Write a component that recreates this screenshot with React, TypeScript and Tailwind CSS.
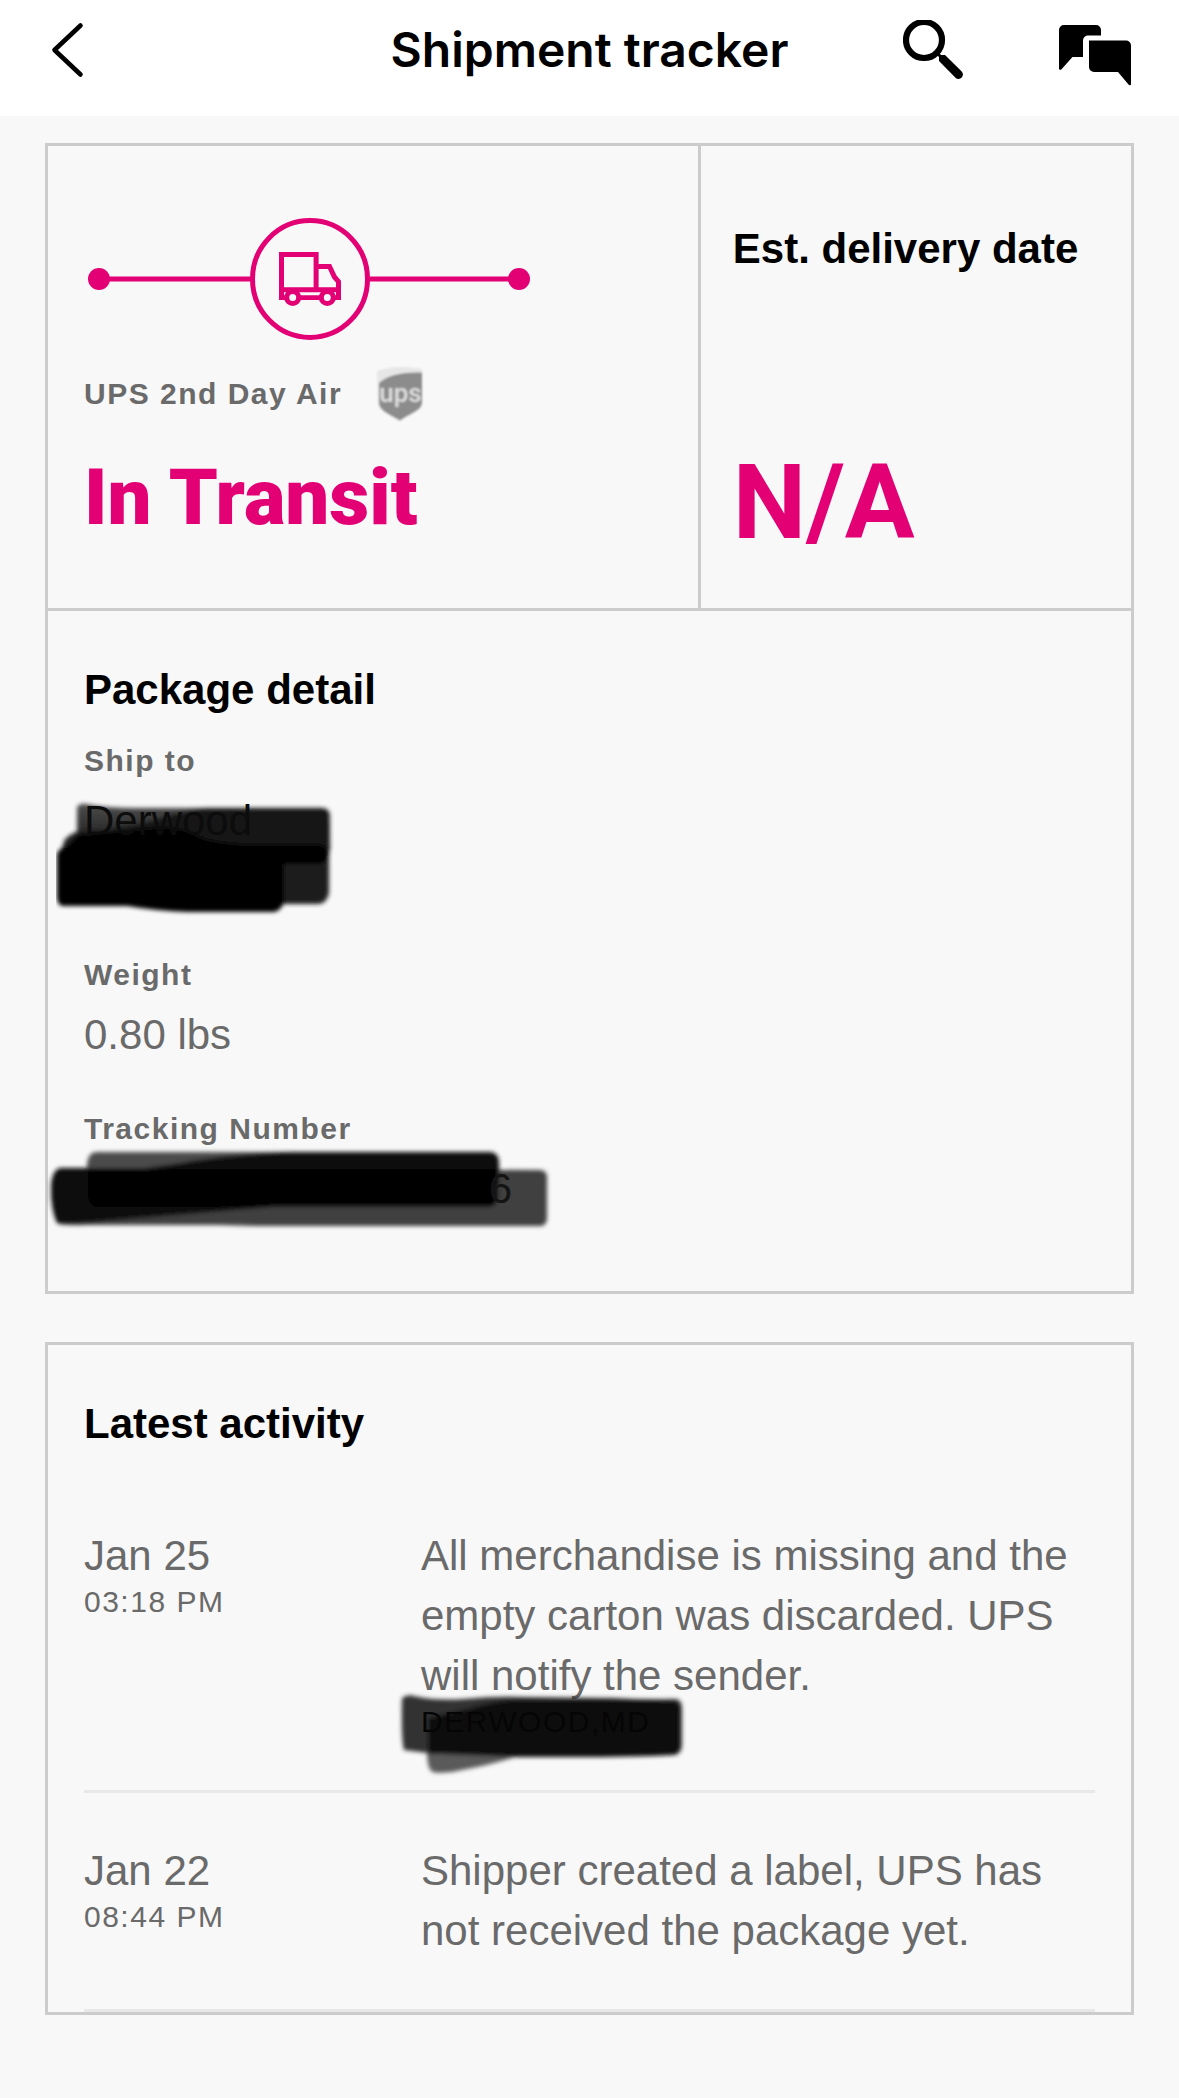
import React from 'react';

interface ActivityItem {
  date: string;
  time: string;
  text: string;
  place?: string;
}

const activity: ActivityItem[] = [
  {
    date: 'Jan 25',
    time: '03:18 PM',
    text: 'All merchandise is missing and the empty carton was discarded. UPS will notify the sender.',
    place: 'DERWOOD,MD',
  },
  {
    date: 'Jan 22',
    time: '08:44 PM',
    text: 'Shipper created a label, UPS has not received the package yet.',
  },
];

const BackIcon = () => (
  <svg width="40" height="60" viewBox="0 0 40 60" fill="none" aria-hidden="true">
    <path d="M32.5 5.5 6.500 30l26 24.500" stroke="#000" strokeWidth="4.600" strokeLinecap="round" strokeLinejoin="round" />
  </svg>
);

const SearchIcon = () => (
  <svg width="60" height="60" viewBox="0 0 60 60" fill="none" aria-hidden="true">
    <circle cx="21" cy="20" r="18" stroke="#000" strokeWidth="6.200" />
    <path d="M34 33l4 4" stroke="#000" strokeWidth="3" />
    <path d="M36 35h6l16.500 16.300a4.200 4.200 0 0 1-6 6.500L36 41z" fill="#000" />
  </svg>
);

const ChatIcon = () => (
  <svg width="72" height="72" viewBox="0 0 72 72" aria-hidden="true">
    <path d="M5 11h32a5 5 0 0 1 5 5v5.500H29a5 5 0 0 0-5 5V43H13.500L2.500 55.200C1.500 56.200 0 55.800 0 54.500V16a5 5 0 0 1 5-5z" />
    <path d="M30 26.500h37a5 5 0 0 1 5 5v38.500c0 1.300-1.500 1.700-2.300.8L59 58H35a5 5 0 0 1-5-5z" />
  </svg>
);

const TransitProgress = () => (
  <svg width="442" height="122" viewBox="0 0 442 122" fill="none" className="ml-1 max-w-full" role="img" aria-label="In transit">
    <circle cx="11" cy="61" r="11" fill="#e20074" />
    <circle cx="431" cy="61" r="11" fill="#e20074" />
    <path d="M11 61h153M281 61h150" stroke="#e20074" strokeWidth="4.800" />
    <ellipse cx="222" cy="61" rx="57.500" ry="58.500" stroke="#e20074" strokeWidth="5" />
    <g stroke="#e20074" strokeWidth="5">
      <path d="M193.500 79.700V36.500h34.600v35" />
      <path d="M228.100 48.500h13.400l5 10.500 4 4.600v16.100" />
      <path d="M191 71.800h62" />
      <path d="M191 79.600h62" strokeWidth="4.600" />
    </g>
    <circle cx="204.700" cy="79.600" r="6" fill="#f8f8f8" stroke="#e20074" strokeWidth="5" />
    <circle cx="239.300" cy="79.600" r="6" fill="#f8f8f8" stroke="#e20074" strokeWidth="5" />
  </svg>
);

const UpsLogo = () => (
  <svg width="48" height="58" viewBox="0 0 48 58" role="img" aria-label="UPS">
    <defs>
      <filter id="soft" x="-10%" y="-10%" width="120%" height="120%">
        <feGaussianBlur stdDeviation="0.800" />
      </filter>
    </defs>
    <g filter="url(#soft)">
      <path d="M1 7C14 2 30 2 46 5v35c0 8-15 11-23 18C16 51 2 48 2 40z" fill="#e6e6e6" />
      <path d="M3 19C12 11 25 8 46 8.500V38c0 9-12 11-22 18.500C14 50 3 47 3 38z" fill="#8c8c8c" />
      <text x="24.500" y="38" textAnchor="middle" fontFamily="Roboto, sans-serif" fontSize="26" fontWeight="500" fill="#dedede">
        ups
      </text>
    </g>
  </svg>
);

// Marker strokes drawn over private details
const AddressMarker = () => (
  <svg width="280" height="120" viewBox="56 796 280 120" className="absolute -left-7 top-1.5 max-w-none" aria-hidden="true">
    <defs>
      <filter id="marker" x="-5%" y="-10%" width="110%" height="120%">
        <feGaussianBlur stdDeviation="2" />
      </filter>
      <linearGradient id="fadeDown" x1="0" y1="0" x2="0" y2="1">
        <stop offset="0" stopColor="#4c4c4c" />
        <stop offset="1" stopColor="#141414" />
      </linearGradient>
    </defs>
    <g filter="url(#marker)">
      <path d="M77 806q3-4 9-3 20 4 50 4h186q8 0 8 8v35H74V838l3-4z" fill="url(#fadeDown)" />
      <path d="M64 840q4-7 20-12h20v20H62z" fill="#222" />
      <path d="M100 830l45-8q30-11 60-15h117q7 1 7 8v40H90z" fill="#131313" />
      <path d="M200 855h129v37q-2 10-10 11H200z" fill="#1c1c1c" />
      <path d="M57 853q2-6 10-8l12-12 50-3q50-8 70 6 20 8 60 8h61q8 2 8 10-1 8-10 9h-34v38q-3 9-10 10h-87q-30-1-60-6H62q-5-2-5-9z" fill="#000" />
    </g>
  </svg>
);

const TrackingMarker = () => (
  <svg width="512" height="86" viewBox="46 1146 512 86" className="absolute -left-[38px] -top-3.5 max-w-none" aria-hidden="true">
    <g filter="url(#marker)">
      <path d="M60 1169q-9 3-9 22t6 33q4 3 30 2h130l40 1h285q5-2 5-8v-42q-1-6-7-6z" fill="#404040" />
      <path d="M87 1166q1-13 10-13h394q8 1 8 12v20H87z" fill="#4c4c4c" />
      <path d="M110 1174l70-10q50-9 110-11h201q8 1 8 12v20H100z" fill="#111" />
      <path d="M60 1169q-9 3-9 22t6 33q10 2 60-3l130-11q30-3 50-3V1169z" fill="#111" />
      <path d="M88 1170h410v29q-2 9-10 9H96q-8-2-8-12z" fill="#000" />
    </g>
  </svg>
);

const PlaceMarker = () => (
  <svg width="292" height="90" viewBox="396 1688 292 90" className="absolute -left-[25px] -top-[17px] max-w-none" aria-hidden="true">
    <g filter="url(#marker)">
      <path d="M402 1697q5-4 12-2 20 5 50 3 30-3 60-2l90 1q30 2 62 1 6 1 6 9v38q-1 8-7 9l-160 2-87-4-24-3q-3-10-2-52z" fill="#303030" />
      <path d="M427 1750h105q-30 11-50 15l-30 6q-18 2-21-1-4-5-4-20z" fill="#5a5a5a" />
      <path d="M428 1717l40-9q30-9 50-9h90l66 1q6 2 6 9v36q-1 8-7 9-40 2-100 2h-60l-70-3h-15z" fill="#111" />
    </g>
  </svg>
);

const Label = ({ children }: { children: React.ReactNode }) => (
  <dt className="mb-2 text-[30px] leading-[45px] font-bold tracking-wider text-[#6a6a6a]">{children}</dt>
);

const App: React.FC = () => {
  return (
    <div className="min-h-screen bg-[#f8f8f8] font-['Liberation_Sans',Arial,sans-serif] text-[42px] leading-[60px] text-[#6a6a6a]">
      {/* Header */}
      <header className="grid h-[116px] grid-cols-[1fr_auto_1fr] items-center bg-white px-12 pb-4 text-black">
        <button aria-label="Back" className="justify-self-start">
          <BackIcon />
        </button>
        <h1 className="font-['Inter',sans-serif] text-[48px] font-semibold">Shipment tracker</h1>
        <div className="flex items-center gap-24 justify-self-end">
          <button aria-label="Search">
            <SearchIcon />
          </button>
          <button aria-label="Chat">
            <ChatIcon />
          </button>
        </div>
      </header>

      <main className="flex flex-col gap-12 px-[45px] pt-[27px] pb-20">
        {/* Shipment */}
        <section className="border-3 border-[#ccc]">
          <div className="flex min-h-[465px] border-b-3 border-[#ccc]">
            <div className="w-3/5 px-9 pt-[72px]">
              <TransitProgress />
              <div className="mt-6 flex items-center gap-[34px]">
                <p className="text-[30px] leading-[45px] font-bold tracking-wider">UPS 2nd Day Air</p>
                <UpsLogo />
              </div>
              <p className="mt-7 font-['Roboto',sans-serif] text-[78px] leading-[96px] font-black text-[#e20074]">In Transit</p>
            </div>
            <div className="flex-1 border-l-3 border-[#ccc] px-8 pt-[73px]">
              <h2 className="font-bold text-black">Est. delivery date</h2>
              <p className="mt-[164px] font-['Roboto',sans-serif] text-[104px] leading-[120px] font-bold text-[#e20074]">N/A</p>
            </div>
          </div>

          <div className="px-9 pt-[49px] pb-[72px]">
            <h2 className="mb-[18px] font-bold text-black">Package detail</h2>
            <dl className="flex flex-col gap-[41px]">
              <div>
                <Label>Ship to</Label>
                <dd className="relative min-h-[120px]">
                  <AddressMarker />
                  <span className="relative text-[#0c0c0c]">Derwood</span>
                </dd>
              </div>
              <div>
                <Label>Weight</Label>
                <dd>0.80 lbs</dd>
              </div>
              <div>
                <Label>Tracking Number</Label>
                <dd className="relative w-[428px] text-right">
                  <TrackingMarker />
                  <span className="relative text-[#141414]">6</span>
                </dd>
              </div>
            </dl>
          </div>
        </section>

        {/* Activity */}
        <section className="border-3 border-[#ccc] px-9 pt-[49px]">
          <h2 className="mb-6 font-bold text-black">Latest activity</h2>
          <ul>
            {activity.map((item) => (
              <li key={item.date} className="flex border-b-3 border-[#e8e8e8] py-12">
                <div className="w-1/3">
                  <p>{item.date}</p>
                  <p className="text-[30px] leading-8 tracking-wider">{item.time}</p>
                </div>
                <div className="w-2/3">
                  <p>{item.text}</p>
                  {item.place && (
                    <div className="relative text-[30px] leading-8 tracking-wider pb-1">
                      <PlaceMarker />
                      <span className="relative text-[#050505]">{item.place}</span>
                    </div>
                  )}
                </div>
              </li>
            ))}
          </ul>
        </section>
      </main>
    </div>
  );
};

export default App;
